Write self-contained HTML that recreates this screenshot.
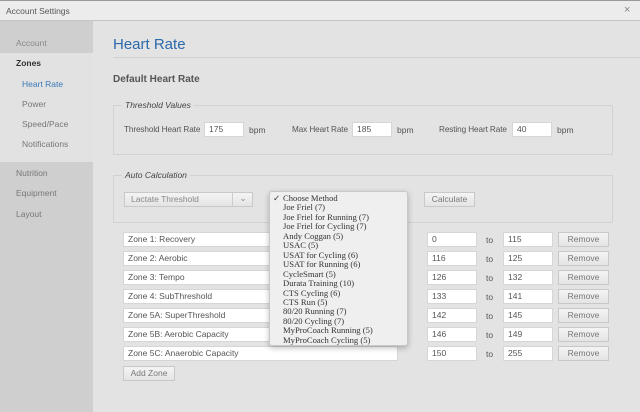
<!DOCTYPE html>
<html><head><style>
*{box-sizing:border-box;margin:0;padding:0}
body{width:640px;height:412px;overflow:hidden;font-family:"Liberation Sans",sans-serif;font-size:8.5px;color:#555;background:#e3e3e3;position:relative}
.a{position:absolute}
.tb{left:0;top:0;width:640px;height:21px;background:#ececec;border-bottom:1px solid #c4c4c4;border-top:1px solid #999}
.sb{left:0;top:21px;width:93px;height:391px;background:#cfcfcf}
.inp{position:absolute;background:#fff;border:1px solid #d6d6d6;height:15px;padding-left:4px;line-height:13px;font-size:8.5px;color:#555}
.btn{position:absolute;background:linear-gradient(#f4f4f4,#e4e4e4);border:1px solid #c8c8c8;height:15px;text-align:center;line-height:13px;font-size:8.5px;color:#777}
.fs{position:absolute;border:1px solid #d2d2d2;left:113px;width:500px}
.lg{position:absolute;top:-6px;left:8px;background:#e3e3e3;padding:0 3px;font-style:italic;color:#444;font-size:8.5px}
.menu{left:269px;top:191px;width:139px;height:155px;background:#efefef;border:1px solid #c8c8c8;border-radius:3px;box-shadow:0 2px 6px rgba(0,0,0,.25);font-family:"Liberation Serif",serif;font-size:8.6px;color:#333;padding:2px 0 0 13px;line-height:9.45px}
.l{font-size:8.2px;letter-spacing:-0.1px}
</style></head><body>
<div class="a tb"><span class="a" style="left:6px;top:5px;color:#555;font-size:8.5px">Account Settings</span><span class="a" style="left:624px;top:3px;color:#888;font-size:11px">×</span></div>
<div class="a sb"></div>
<div class="a" style="left:0;top:53px;width:93px;height:109px;background:#e2e2e2"></div>
<div class="a" style="left:16px;top:38px;color:#888">Account</div>
<div class="a" style="left:16px;top:58px;font-weight:bold;color:#333">Zones</div>
<div class="a" style="left:22px;top:79px;color:#3a78b8">Heart Rate</div>
<div class="a" style="left:22px;top:99px;color:#777">Power</div>
<div class="a" style="left:22px;top:119px;color:#777">Speed/Pace</div>
<div class="a" style="left:22px;top:139px;color:#777">Notifications</div>
<div class="a" style="left:16px;top:168px;color:#777">Nutrition</div>
<div class="a" style="left:16px;top:188px;color:#777">Equipment</div>
<div class="a" style="left:16px;top:209px;color:#777">Layout</div>

<div class="a" style="left:113px;top:36px;font-size:15px;color:#2a6aab">Heart Rate</div>
<div class="a" style="left:113px;top:57px;width:527px;height:1px;background:#d0d0d0"></div>
<div class="a" style="left:113px;top:74px;font-size:10px;font-weight:bold;color:#555">Default Heart Rate</div>

<div class="fs" style="top:105px;height:50px"><span class="lg">Threshold Values</span></div>
<div class="a l" style="left:124px;top:125px">Threshold Heart Rate</div>
<div class="inp" style="left:204px;top:122px;width:40px">175</div>
<div class="a" style="left:249px;top:125px">bpm</div>
<div class="a l" style="left:292px;top:125px">Max Heart Rate</div>
<div class="inp" style="left:352px;top:122px;width:40px">185</div>
<div class="a" style="left:397px;top:125px">bpm</div>
<div class="a l" style="left:439px;top:125px">Resting Heart Rate</div>
<div class="inp" style="left:512px;top:122px;width:40px">40</div>
<div class="a" style="left:557px;top:125px">bpm</div>

<div class="fs" style="top:175px;height:48px"><span class="lg">Auto Calculation</span></div>
<div class="btn" style="left:124px;top:192px;width:129px;text-align:left;padding-left:6px;color:#888">Lactate Threshold<span class="a" style="left:107px;top:-1px;width:21px;height:14px;border-left:1px solid #ccc;text-align:center">⌄</span></div>
<div class="btn" style="left:424px;top:192px;width:51px">Calculate</div>

<div class="inp" style="left:123px;top:232px;width:275px">Zone 1: Recovery</div>
<div class="inp" style="left:123px;top:251px;width:275px">Zone 2: Aerobic</div>
<div class="inp" style="left:123px;top:270px;width:275px">Zone 3: Tempo</div>
<div class="inp" style="left:123px;top:289px;width:275px">Zone 4: SubThreshold</div>
<div class="inp" style="left:123px;top:308px;width:275px">Zone 5A: SuperThreshold</div>
<div class="inp" style="left:123px;top:327px;width:275px">Zone 5B: Aerobic Capacity</div>
<div class="inp" style="left:123px;top:346px;width:275px">Zone 5C: Anaerobic Capacity</div>
<div class="btn" style="left:123px;top:366px;width:52px">Add Zone</div>

<div class="inp" style="left:427px;top:232px;width:50px">0</div><div class="a" style="left:486px;top:235px">to</div><div class="inp" style="left:503px;top:232px;width:50px">115</div><div class="btn" style="left:558px;top:232px;width:51px">Remove</div>
<div class="inp" style="left:427px;top:251px;width:50px">116</div><div class="a" style="left:486px;top:254px">to</div><div class="inp" style="left:503px;top:251px;width:50px">125</div><div class="btn" style="left:558px;top:251px;width:51px">Remove</div>
<div class="inp" style="left:427px;top:270px;width:50px">126</div><div class="a" style="left:486px;top:273px">to</div><div class="inp" style="left:503px;top:270px;width:50px">132</div><div class="btn" style="left:558px;top:270px;width:51px">Remove</div>
<div class="inp" style="left:427px;top:289px;width:50px">133</div><div class="a" style="left:486px;top:292px">to</div><div class="inp" style="left:503px;top:289px;width:50px">141</div><div class="btn" style="left:558px;top:289px;width:51px">Remove</div>
<div class="inp" style="left:427px;top:308px;width:50px">142</div><div class="a" style="left:486px;top:311px">to</div><div class="inp" style="left:503px;top:308px;width:50px">145</div><div class="btn" style="left:558px;top:308px;width:51px">Remove</div>
<div class="inp" style="left:427px;top:327px;width:50px">146</div><div class="a" style="left:486px;top:330px">to</div><div class="inp" style="left:503px;top:327px;width:50px">149</div><div class="btn" style="left:558px;top:327px;width:51px">Remove</div>
<div class="inp" style="left:427px;top:346px;width:50px">150</div><div class="a" style="left:486px;top:349px">to</div><div class="inp" style="left:503px;top:346px;width:50px">255</div><div class="btn" style="left:558px;top:346px;width:51px">Remove</div>

<div class="a menu">
<div><span class="a" style="left:3px">✓</span>Choose Method</div>
<div>Joe Friel (7)</div><div>Joe Friel for Running (7)</div><div>Joe Friel for Cycling (7)</div>
<div>Andy Coggan (5)</div><div>USAC (5)</div><div>USAT for Cycling (6)</div><div>USAT for Running (6)</div>
<div>CycleSmart (5)</div><div>Durata Training (10)</div><div>CTS Cycling (6)</div><div>CTS Run (5)</div>
<div>80/20 Running (7)</div><div>80/20 Cycling (7)</div><div>MyProCoach Running (5)</div><div>MyProCoach Cycling (5)</div>
</div>
</body></html>
